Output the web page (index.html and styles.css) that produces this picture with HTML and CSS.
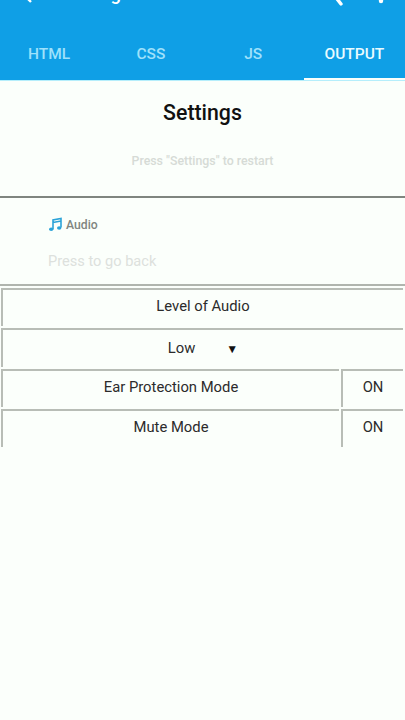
FILE: index.html
```html
<!DOCTYPE html>
<html lang="en">

<head>
  <meta charset="UTF-8" />
  <meta name="viewport" content="width=device-width, initial-scale=1.0" />
  <title>Settings</title>
  <link rel="stylesheet" href="styles.css">
</head>

<body>
  <header class="appbar">
    <div class="toolbar">
      <svg class="back-icon" width="14" height="24" viewBox="0 0 14 24">
        <path d="M11 4 L3 12 L11 20" fill="none" stroke="#fff" stroke-width="2.4" />
      </svg>
      <span class="toolbar-title">Setting</span>
      <svg class="search-icon" width="24" height="24" viewBox="0 0 24 24">
        <circle cx="9" cy="9" r="6" fill="none" stroke="#fff" stroke-width="2.4" />
        <path d="M13 13 L20 22" stroke="#fff" stroke-width="3.4" stroke-linecap="round" />
      </svg>
      <svg class="more-icon" width="6" height="24" viewBox="0 0 6 24">
        <circle cx="3" cy="5" r="2.2" fill="#fff" />
        <circle cx="3" cy="12" r="2.2" fill="#fff" />
        <circle cx="3" cy="19" r="2.2" fill="#fff" />
      </svg>
    </div>
    <nav class="tabs">
      <div class="tab">HTML</div>
      <div class="tab">CSS</div>
      <div class="tab">JS</div>
      <div class="tab active">OUTPUT</div>
    </nav>
  </header>

  <main>
    <section class="intro">
      <h1>Settings</h1>
      <p class="restart">Press "Settings" to restart</p>
    </section>
    <hr class="rule-dark">
    <section class="audio">
      <div class="audio-title">
        <svg width="15" height="15" viewBox="0 0 15 15">
          <path d="M5 12 V3 L13 1.5 V10.5 M5 5.5 L13 4" fill="none" stroke="#2ba3d8" stroke-width="1.6" />
          <ellipse cx="3.2" cy="12.3" rx="2.2" ry="1.7" fill="#2ba3d8" />
          <ellipse cx="11.2" cy="11" rx="2.2" ry="1.7" fill="#2ba3d8" />
        </svg>
        <span>Audio</span>
      </div>
      <p class="back-hint">Press to go back</p>
    </section>
    <hr class="rule-light">
    <table class="options">
      <tr>
        <td colspan="2">Level of Audio</td>
      </tr>
      <tr>
        <td colspan="2" class="select-cell"><span class="select-value">Low</span><span class="select-arrow">▼</span></td>
      </tr>
      <tr>
        <td>Ear Protection Mode</td>
        <td class="toggle">ON</td>
      </tr>
      <tr>
        <td>Mute Mode</td>
        <td class="toggle">ON</td>
      </tr>
    </table>
  </main>
</body>

</html>
```
FILE: styles.css
```css
* {
  box-sizing: border-box;
  margin: 0;
  padding: 0;
}

html,
body {
  height: 720px;
  overflow: hidden;
}

body {
  font-family: Roboto, "Liberation Sans", sans-serif;
  background-color: #fbfffb;
  color: #222;
}

/* App bar, its top is cut off by the screenshot */
.appbar {
  display: flow-root;
  height: 80px;
  background-color: #0f9fe6;
  box-shadow: 0 1px 0 #b5eefb;
  color: #fff;
}

.toolbar {
  display: flex;
  align-items: center;
  height: 24px;
  margin-top: -18px;
  padding-left: 20px;
  padding-right: 21px;
}

.back-icon {
  margin-right: 28px;
}

.toolbar-title {
  flex: 1;
  font-size: 18.5px;
  font-weight: 500;
}

.search-icon {
  margin-right: 33px;
}

.tabs {
  display: flex;
  height: 74px;
  padding-top: 17px;
}

.tab {
  flex: 0 0 25%;
  height: 57px;
  padding-top: 22px;
  text-align: center;
  font-size: 15.5px;
  font-weight: 500;
  color: #9fe1fb;
}

.tab:first-child {
  padding-right: 3px;
}

.tab:nth-child(2) {
  padding-right: 2px;
}

.tab.active {
  color: #e9fbff;
  border-bottom: 2px solid #fbfffb;
}

/* Page */
.intro {
  height: 116px;
  text-align: center;
}

h1 {
  padding-top: 21px;
  font-size: 21.3px;
  line-height: 24px;
  font-weight: 500;
  color: #111;
}

.restart {
  margin-top: 28px;
  font-size: 12.35px;
  line-height: 16px;
  font-weight: 500;
  color: #d6dbd6;
}

hr {
  border: none;
}

.rule-dark {
  height: 2px;
  background-color: #7f857f;
}

.audio {
  height: 86px;
  padding: 19px 0 0 48px;
}

.audio-title {
  display: flex;
  align-items: center;
  gap: 3px;
  height: 15px;
  font-size: 12.2px;
  font-weight: 500;
  color: #808580;
}

.back-hint {
  margin-top: 20px;
  font-size: 14.6px;
  line-height: 18px;
  color: #dde1dd;
}

.rule-light {
  height: 2px;
  background-color: #b0b5ae;
}

.options {
  width: calc(100% + 1px);
  margin-left: -1px;
  border-collapse: separate;
  border-spacing: 2px;
}

.options td {
  height: 38.3px;
  padding-bottom: 4px;
  border-top: 2px solid #b8bdb6;
  border-left: 2px solid #b8bdb6;
  text-align: center;
  font-size: 14.8px;
  color: #2b2b2b;
}

.options td.toggle {
  width: 62px;
}

.options td.select-cell {
  padding-bottom: 1px;
}

.select-arrow {
  margin-left: 31px;
  font-size: 12px;
  color: #111;
}
```
